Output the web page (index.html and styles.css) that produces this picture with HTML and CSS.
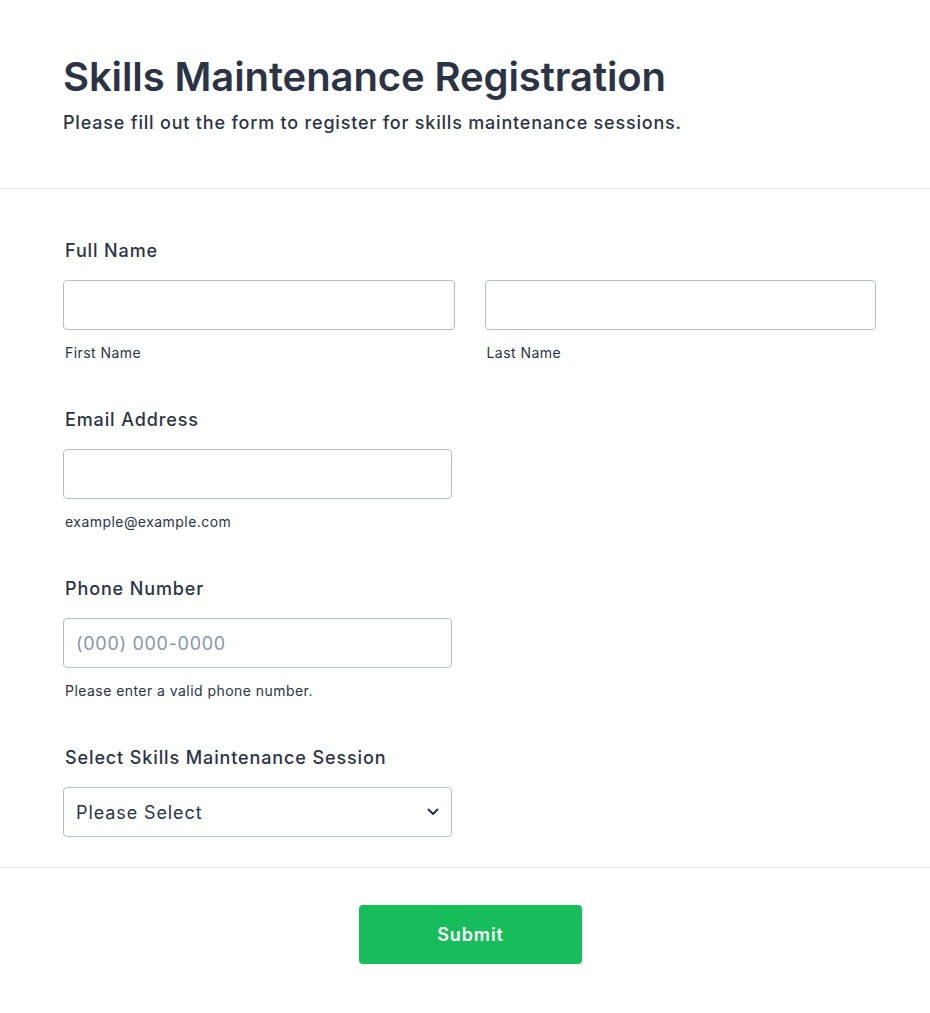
FILE: index.html
```html
<!DOCTYPE html>
<html lang="en">
<head>
<meta charset="utf-8">
<title>Skills Maintenance Registration</title>
<link rel="stylesheet" href="styles.css">
</head>
<body>
<div class="page">
  <header class="form-header">
    <h1 class="title">Skills Maintenance Registration</h1>
    <p class="subtitle">Please fill out the form to register for skills maintenance sessions.</p>
  </header>
  <form class="form-body">
    <div class="field">
      <div class="label">Full Name</div>
      <div class="row">
        <div class="col">
          <input class="input" type="text">
          <div class="sublabel">First Name</div>
        </div>
        <div class="col">
          <input class="input" type="text">
          <div class="sublabel">Last Name</div>
        </div>
      </div>
    </div>
    <div class="field">
      <div class="label">Email Address</div>
      <div class="half">
        <input class="input" type="email">
        <div class="sublabel">example@example.com</div>
      </div>
    </div>
    <div class="field">
      <div class="label">Phone Number</div>
      <div class="half">
        <input class="input" type="tel" placeholder="(000) 000-0000">
        <div class="sublabel">Please enter a valid phone number.</div>
      </div>
    </div>
    <div class="field field-last">
      <div class="label">Select Skills Maintenance Session</div>
      <div class="half select-wrap">
        <select class="input select">
          <option>Please Select</option>
        </select>
        <svg class="chevron" width="12" height="8" viewBox="0 0 12 8"><path d="M1.5 1.5 L6 6 L10.5 1.5" fill="none" stroke="#2c3345" stroke-width="2" stroke-linecap="round" stroke-linejoin="round"/></svg>
      </div>
    </div>
  </form>
  <div class="form-footer">
    <button class="submit" type="button">Submit</button>
  </div>
</div>
</body>
</html>
```
FILE: styles.css
```css
* { box-sizing: border-box; }
html, body { margin: 0; padding: 0; background: #ffffff; }
body {
  font-family: Inter, "Noto Sans", sans-serif;
  color: #2c3345;
}
.page { width: 930px; }
.form-header {
  padding: 53px 0 53px 63px;
  border-bottom: 1px solid #e3e5ea;
}
.title {
  margin: 0;
  font-size: 40px;
  line-height: 48px;
  font-weight: 600;
  letter-spacing: -0.1px;
  color: #2c3345;
}
.subtitle {
  margin: 10px 0 0 0;
  font-size: 18px;
  line-height: 24px;
  font-weight: 500;
  letter-spacing: 0.8px;
  color: #2c3345;
}
.form-body {
  padding: 50px 0 0 63px;
  border-bottom: 1px solid #e3e5ea;
  width: 930px;
}
.field { padding-bottom: 46px; width: 813px; }
.field-last { padding-bottom: 30px; }
.label {
  font-size: 18px;
  line-height: 24px;
  font-weight: 500;
  letter-spacing: 0.88px;
  padding-left: 2px;
  margin-bottom: 17px;
}
.row { display: flex; gap: 30px; }
.col { flex: 1 1 0; }
.half { width: 389px; }
.input {
  display: block;
  width: 100%;
  height: 50px;
  border: 1px solid #b8bdc9;
  border-radius: 4px;
  padding: 0 12px;
  font-family: Inter, "Noto Sans", sans-serif;
  font-size: 18px;
  letter-spacing: 0.7px;
  color: #2c3345;
  background: #ffffff;
  outline: none;
}
.input::placeholder { color: #8894ab; }
.sublabel {
  margin-top: 14px;
  padding-left: 2px;
  font-size: 14px;
  line-height: 18px;
  letter-spacing: 0.45px;
  color: #2c3345;
}
.select-wrap { position: relative; }
.select {
  appearance: none;
  -webkit-appearance: none;
  padding-left: 12px;
  letter-spacing: 0.9px;
}
.chevron {
  position: absolute;
  right: 13px;
  top: 21px;
  pointer-events: none;
}
.form-footer {
  width: 941px;
  display: flex;
  justify-content: center;
  padding-top: 37px;
}
.submit {
  width: 223px;
  height: 59px;
  border: none;
  border-radius: 4px;
  background: #18bd5b;
  color: #ffffff;
  font-family: Inter, "Noto Sans", sans-serif;
  font-size: 18px;
  font-weight: 600;
  letter-spacing: 0.9px;
}
```
